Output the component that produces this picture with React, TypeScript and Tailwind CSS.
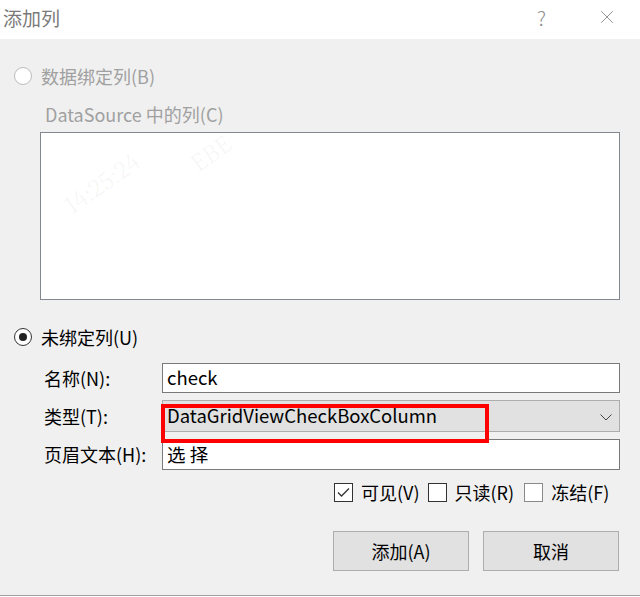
import { X } from 'lucide-react';

const font = { fontFamily: '"Noto Sans CJK SC", "Noto Sans", sans-serif' };

function Radio({ checked, disabled }: { checked?: boolean; disabled?: boolean }) {
  return (
    <span
      className={`w-[18px] h-[18px] rounded-full border bg-white flex items-center justify-center ${
        disabled ? 'border-[#bcbcbc]' : 'border-[#333333]'
      }`}
    >
      {checked && <span className="w-[8px] h-[8px] rounded-full bg-[#222222]" />}
    </span>
  );
}

function CheckBox({ checked, light }: { checked?: boolean; light?: boolean }) {
  return (
    <span
      className={`w-[19px] h-[19px] border bg-white flex items-center justify-center ${
        light ? 'border-[#8a8a8a]' : 'border-[#333333]'
      }`}
    >
      {checked && (
        <svg width="13" height="11" viewBox="0 0 13 11">
          <path d="M1 5.5 L4.5 9 L12 1.5" fill="none" stroke="#333" strokeWidth="1.3" />
        </svg>
      )}
    </span>
  );
}

export default function App() {
  return (
    <div className="w-[640px] h-[597px] overflow-hidden relative select-none" style={font}>
      {/* Title bar */}
      <div className="h-[39px] bg-white flex items-center">
        <span className="ml-[3px] -mt-[4px] text-[19px] text-[#7a7a7a] leading-none">添加列</span>
        <span className="ml-auto -mt-[4px] mr-[50px] text-[20px] text-[#8a8a8a] font-light leading-none">?</span>
        <X className="mr-[22px] -mt-[6px] text-[#8a8a8a]" size={22} strokeWidth={1} />
      </div>

      {/* Body */}
      <div className="h-[557px] bg-[#f0f0f0] border-b border-[#a0a0a0] flex flex-col">
        <div className="mt-[27px] ml-[14px] h-[20px] flex items-center gap-[9px]">
          <Radio disabled />
          <span className="text-[18px] text-[#a0a0a0]">数据绑定列(B)</span>
        </div>

        <div className="mt-[18px] ml-[45px] h-[20px] flex items-center text-[18px] text-[#a0a0a0]">
          DataSource 中的列(C)
        </div>

        <div className="mt-[8px] ml-[40px] w-[580px] h-[168px] bg-white border border-[#828790]" />

        <div className="mt-[27px] ml-[14px] h-[20px] flex items-center gap-[9px]">
          <Radio checked />
          <span className="text-[18px] text-black">未绑定列(U)</span>
        </div>

        {/* Name */}
        <div className="mt-[16px] flex items-center h-[30px]">
          <span className="ml-[44px] w-[118px] text-[18px] text-black">名称(N):</span>
          <div className="w-[458px] h-[30px] bg-white border border-[#7a7a7a] flex items-center pl-[4px] text-[18.5px] text-black">
            check
          </div>
        </div>

        {/* Type */}
        <div className="mt-[7px] flex items-center h-[32px]">
          <span className="ml-[44px] w-[118px] text-[18px] text-black">类型(T):</span>
          <div className="relative w-[458px] h-[32px] bg-[#e1e1e1] border border-[#adadad] flex items-center pl-[4px] text-[18.5px] text-black">
            DataGridViewCheckBoxColumn
            <svg className="absolute right-[7px] top-[13px]" width="12" height="7" viewBox="0 0 12 7">
              <path d="M0.5 0.5 L6 6 L11.5 0.5" fill="none" stroke="#444" strokeWidth="1" />
            </svg>
            <div className="absolute left-[-2px] top-[3px] w-[328px] h-[39px] border-4 border-[#ff0000] z-10" />
          </div>
        </div>

        {/* Header text */}
        <div className="mt-[7px] flex items-center h-[31px]">
          <span className="ml-[44px] w-[118px] text-[18px] text-black">页眉文本(H):</span>
          <div className="w-[458px] h-[31px] bg-white border border-[#7a7a7a] flex items-center pl-[4px] text-[18.5px] text-black">
            选 择
          </div>
        </div>

        {/* Options */}
        <div className="mt-[13px] ml-[334px] h-[19px] flex items-center text-[18px] text-black">
          <CheckBox checked />
          <span className="ml-[8px]">可见(V)</span>
          <span className="ml-[8px]">
            <CheckBox />
          </span>
          <span className="ml-[8px]">只读(R)</span>
          <span className="ml-[10px]">
            <CheckBox light />
          </span>
          <span className="ml-[8px]">冻结(F)</span>
        </div>

        {/* Buttons */}
        <div className="mt-[29px] ml-[333px] flex gap-[14px]">
          <button className="w-[136px] h-[40px] bg-[#e1e1e1] border border-[#adadad] text-[18px] text-black">
            添加(A)
          </button>
          <button className="w-[136px] h-[40px] bg-[#e1e1e1] border border-[#adadad] text-[18px] text-black">
            取消
          </button>
        </div>
      </div>

      {/* Faint watermark over the list box */}
      <div className="absolute inset-0 pointer-events-none text-[rgba(0,0,0,0.04)] font-serif text-[26px]">
        <span className="absolute left-[60px] top-[165px] -rotate-[35deg]">14:25:24</span>
        <span className="absolute left-[190px] top-[135px] -rotate-[35deg]">EBE</span>
      </div>
    </div>
  );
}
